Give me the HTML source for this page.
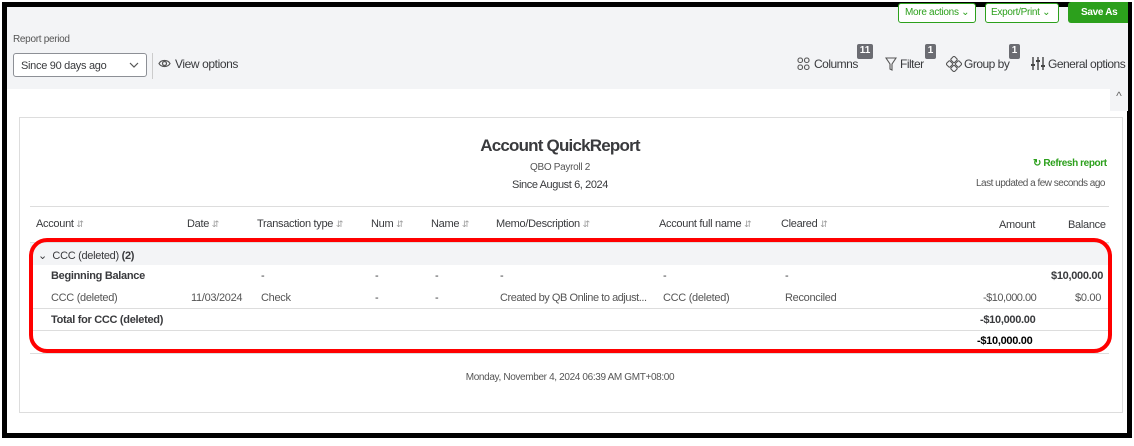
<!DOCTYPE html>
<html><head><style>
*{margin:0;padding:0;box-sizing:border-box}
body{width:1134px;height:446px;background:#fff;font-family:"Liberation Sans",sans-serif;position:relative;overflow:hidden;color:#393a3d}
.a{position:absolute;white-space:nowrap}
.frame{position:absolute;left:2px;top:2px;width:1130px;height:436px;border:5px solid #000;background:#fff}
.s{font-size:11px;letter-spacing:-0.3px}
.h{font-size:11px;color:#393a3d;letter-spacing:-0.3px}
.ar{color:#999;font-size:9px}
.b{font-weight:bold}
svg{position:absolute}
</style></head><body>
<div class="frame"></div>
<div class="a" style="left:7px;top:7px;width:1121px;height:82px;background:#f3f4f6"></div>
<div class="a" style="left:1110px;top:89px;width:18px;height:22px;background:#f3f4f6;font-size:12px;color:#666;text-align:center">^</div>
<div class="a s" style="left:13px;top:34px;font-size:10px;color:#555">Report period</div>
<div class="a" style="left:13px;top:53px;width:134px;height:24px;border:1px solid #8d9096;border-radius:3px;background:#fff;font-size:11px;padding:6px 0 0 7px;letter-spacing:-0.3px">Since 90 days ago<svg style="left:115px;top:8px" width="10" height="6" viewBox="0 0 10 6"><path d="M1 1l4 4 4-4" fill="none" stroke="#555" stroke-width="1.2"/></svg></div>
<div class="a" style="left:152px;top:53px;width:1px;height:26px;background:#ccc"></div>
<svg style="left:158px;top:58px" width="13" height="11" viewBox="0 0 13 11"><path d="M1 5.5C3 1.5 10 1.5 12 5.5 10 9.5 3 9.5 1 5.5z" fill="none" stroke="#555" stroke-width="1.2"/><circle cx="6.5" cy="5.5" r="2" fill="none" stroke="#555" stroke-width="1.2"/></svg>
<div class="a" style="left:175px;top:57px;font-size:12px;letter-spacing:-0.4px">View options</div>
<div class="a" style="left:898px;top:3px;width:78px;height:20px;border:1px solid #2ca01c;border-radius:3px;font-size:10px;color:#2ca01c;padding:3px 0 0 6px;letter-spacing:-0.3px;background:#fff">More actions &#8964;</div>
<div class="a" style="left:985px;top:3px;width:74px;height:20px;border:1px solid #2ca01c;border-radius:3px;font-size:10px;color:#2ca01c;padding:3px 0 0 5px;letter-spacing:-0.3px;background:#fff">Export/Print &#8964;</div>
<div class="a" style="left:1068px;top:2px;width:60px;height:21px;background:#2ca01c;border-radius:3px 0 0 3px;font-size:10px;color:#fff;font-weight:bold;padding:5px 0 0 13px;letter-spacing:-0.3px">Save As</div>
<svg style="left:797px;top:57px" width="13" height="14" viewBox="0 0 13 14"><g fill="none" stroke="#555" stroke-width="1.1"><rect x="1" y="1" width="4.5" height="4.5" rx="2"/><rect x="7.5" y="1" width="4.5" height="4.5" rx="2"/><rect x="1" y="8" width="4.5" height="4.5" rx="2"/><rect x="7.5" y="8" width="4.5" height="4.5" rx="2"/></g></svg>
<div class="a" style="left:814px;top:57px;font-size:12px;letter-spacing:-0.5px">Columns</div>
<div class="a" style="left:857px;top:44px;width:16px;height:15px;background:#6b6c72;border-radius:2px;color:#fff;font-size:10px;font-weight:bold;text-align:center;padding-top:1px">11</div>
<svg style="left:885px;top:57px" width="12" height="14" viewBox="0 0 12 14"><path d="M1 1h10L7 7v6L5 12V7z" fill="none" stroke="#555" stroke-width="1.1"/></svg>
<div class="a" style="left:900px;top:57px;font-size:12px;letter-spacing:-0.5px">Filter</div>
<div class="a" style="left:925px;top:44px;width:11px;height:15px;background:#6b6c72;border-radius:2px;color:#fff;font-size:10px;font-weight:bold;text-align:center;padding-top:1px">1</div>
<svg style="left:946px;top:56px" width="16" height="16" viewBox="0 0 16 16"><g fill="none" stroke="#555" stroke-width="1.1"><rect x="5.5" y="1" width="5" height="5" rx="1" transform="rotate(45 8 3.5)"/><rect x="1" y="5.5" width="5" height="5" rx="1" transform="rotate(45 3.5 8)"/><rect x="10" y="5.5" width="5" height="5" rx="1" transform="rotate(45 12.5 8)"/><rect x="5.5" y="10" width="5" height="5" rx="1" transform="rotate(45 8 12.5)"/></g></svg>
<div class="a" style="left:964px;top:57px;font-size:12px;letter-spacing:-0.5px">Group by</div>
<div class="a" style="left:1009px;top:44px;width:11px;height:15px;background:#6b6c72;border-radius:2px;color:#fff;font-size:10px;font-weight:bold;text-align:center;padding-top:1px">1</div>
<svg style="left:1031px;top:56px" width="14" height="15" viewBox="0 0 14 15"><g stroke="#444" stroke-width="1.4" fill="none"><path d="M2 1v13M7 1v13M12 1v13"/><path d="M0 9h4M5 5h4M10 10h4" stroke-width="2"/></g></svg>
<div class="a" style="left:1048px;top:57px;font-size:12px;letter-spacing:-0.5px">General options</div>
<div class="a" style="left:19px;top:117px;width:1104px;height:296px;border:1px solid #ddd"></div>
<div class="a b" style="left:0;width:1120px;top:136px;text-align:center;font-size:17px;letter-spacing:-0.8px">Account QuickReport</div>
<div class="a" style="left:0;width:1120px;top:162px;text-align:center;font-size:10px;color:#555;letter-spacing:-0.3px">QBO Payroll 2</div>
<div class="a" style="left:0;width:1120px;top:179px;text-align:center;font-size:11px;letter-spacing:-0.4px">Since August 6, 2024</div>
<div class="a b" style="left:1033px;top:158px;font-size:10px;color:#2ca01c;letter-spacing:-0.4px">&#8635; Refresh report</div>
<div class="a" style="left:976px;top:178px;font-size:10px;color:#555;letter-spacing:-0.5px">Last updated a few seconds ago</div>
<div class="a" style="left:30px;top:206px;width:1079px;height:1px;background:#ddd"></div>
<div class="a h" style="left:36px;top:218px">Account <span class="ar">&#8693;</span></div>
<div class="a h" style="left:187px;top:218px">Date <span class="ar">&#8693;</span></div>
<div class="a h" style="left:257px;top:218px">Transaction type <span class="ar">&#8693;</span></div>
<div class="a h" style="left:371px;top:218px">Num <span class="ar">&#8693;</span></div>
<div class="a h" style="left:431px;top:218px">Name <span class="ar">&#8693;</span></div>
<div class="a h" style="left:496px;top:218px">Memo/Description <span class="ar">&#8693;</span></div>
<div class="a h" style="left:659px;top:218px">Account full name <span class="ar">&#8693;</span></div>
<div class="a h" style="left:781px;top:218px">Cleared <span class="ar">&#8693;</span></div>
<div class="a h" style="left:999px;top:219px">Amount</div>
<div class="a h" style="left:1068px;top:219px">Balance</div>
<div class="a" style="left:30px;top:242px;width:1079px;height:23px;background:#f3f4f6;border-top:1px solid #ddd"></div>
<div class="a h" style="left:38px;top:249px">&#8964;&nbsp; CCC (deleted) <b>(2)</b></div>
<div class="a h b" style="left:51px;top:270px">Beginning Balance</div>
<div class="a h" style="left:261px;top:270px">-</div><div class="a h" style="left:375px;top:270px">-</div><div class="a h" style="left:435px;top:270px">-</div><div class="a h" style="left:500px;top:270px">-</div><div class="a h" style="left:663px;top:270px">-</div><div class="a h" style="left:785px;top:270px">-</div>
<div class="a h b" style="left:1051px;top:270px">$10,000.00</div>
<div class="a h" style="left:51px;top:292px;color:#555">CCC (deleted)</div>
<div class="a h" style="left:191px;top:292px;color:#555">11/03/2024</div>
<div class="a h" style="left:261px;top:292px;color:#555">Check</div>
<div class="a h" style="left:375px;top:292px">-</div><div class="a h" style="left:435px;top:292px">-</div>
<div class="a h" style="left:500px;top:292px;color:#555;letter-spacing:-0.45px">Created by QB Online to adjust...</div>
<div class="a h" style="left:663px;top:292px;color:#555">CCC (deleted)</div>
<div class="a h" style="left:785px;top:292px;color:#555">Reconciled</div>
<div class="a h" style="left:983px;top:292px;color:#555;letter-spacing:-0.5px">-$10,000.00</div>
<div class="a h" style="left:1075px;top:292px;color:#555">$0.00</div>
<div class="a" style="left:30px;top:308px;width:1079px;height:1px;background:#ddd"></div>
<div class="a h b" style="left:51px;top:314px">Total for CCC (deleted)</div>
<div class="a h b" style="left:980px;top:314px">-$10,000.00</div>
<div class="a" style="left:30px;top:330px;width:1079px;height:1px;background:#ddd"></div>
<div class="a h b" style="left:977px;top:335px;color:#000">-$10,000.00</div>
<div class="a" style="left:30px;top:353px;width:1079px;height:1px;background:#ddd"></div>
<div class="a" style="left:29px;top:238px;width:1083px;height:115px;border:4px solid #f00;border-radius:18px"></div>
<div class="a" style="left:0;width:1140px;top:372px;text-align:center;font-size:10px;color:#555;letter-spacing:-0.35px">Monday, November 4, 2024 06:39 AM GMT+08:00</div>
</body></html>
